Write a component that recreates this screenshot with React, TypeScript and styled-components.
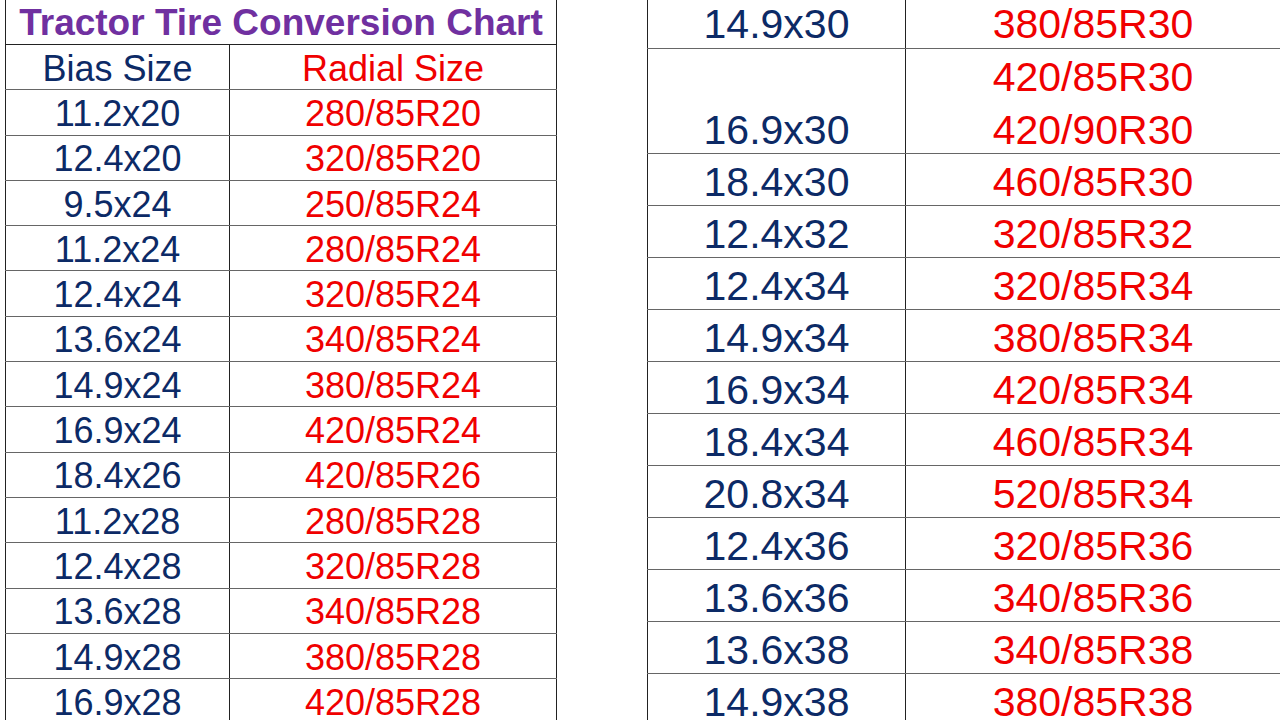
import React from 'react';
import styled, { createGlobalStyle } from 'styled-components';

const Global = createGlobalStyle`
  body { margin: 0; background: #fff; overflow: hidden; font-family: "Liberation Sans", Arial, sans-serif; }
`;

const Page = styled.div`
  display: flex;
  align-items: flex-start;
  width: 1280px;
  height: 720px;
  overflow: hidden;
`;

const Table = styled.table<{ $width: number; $left: number; $top: number }>`
  border-collapse: collapse;
  width: ${({ $width }) => $width}px;
  margin-left: ${({ $left }) => $left}px;
  margin-top: ${({ $top }) => $top}px;
  table-layout: fixed;
  flex-shrink: 0;
`;

const Title = styled.th`
  height: 44px;
  padding: 0;
  color: #7030a0;
  font-size: 37px;
  font-weight: bold;
  text-align: center;
  border: 1px solid #222;
  border-top: none;
  line-height: 1;
  white-space: nowrap;
`;

const Cell = styled.td<{ $red?: boolean; $h: number; $size: number; $padTop?: number }>`
  height: ${({ $h }) => $h}px;
  padding: ${({ $padTop = 0 }) => $padTop}px 0 0;
  text-align: center;
  font-size: ${({ $size }) => $size}px;
  line-height: 1;
  color: ${({ $red }) => ($red ? '#f00000' : '#0c2a66')};
  border: 1px solid #222;
  border-bottom-color: #666;
  box-sizing: border-box;
`;

const Stack = styled.div`
  display: flex;
  flex-direction: column;
  gap: 12px;
`;

const left: [string, string][] = [
  ['Bias Size', 'Radial Size'],
  ['11.2x20', '280/85R20'],
  ['12.4x20', '320/85R20'],
  ['9.5x24', '250/85R24'],
  ['11.2x24', '280/85R24'],
  ['12.4x24', '320/85R24'],
  ['13.6x24', '340/85R24'],
  ['14.9x24', '380/85R24'],
  ['16.9x24', '420/85R24'],
  ['18.4x26', '420/85R26'],
  ['11.2x28', '280/85R28'],
  ['12.4x28', '320/85R28'],
  ['13.6x28', '340/85R28'],
  ['14.9x28', '380/85R28'],
  ['16.9x28', '420/85R28'],
];

const right: [string, string][] = [
  ['18.4x30', '460/85R30'],
  ['12.4x32', '320/85R32'],
  ['12.4x34', '320/85R34'],
  ['14.9x34', '380/85R34'],
  ['16.9x34', '420/85R34'],
  ['18.4x34', '460/85R34'],
  ['20.8x34', '520/85R34'],
  ['12.4x36', '320/85R36'],
  ['13.6x36', '340/85R36'],
  ['13.6x38', '340/85R38'],
  ['14.9x38', '380/85R38'],
];

export default function App() {
  return (
    <Page>
      <Global />
      <Table $width={552} $left={5} $top={0}>
        <colgroup>
          <col style={{ width: 224 }} />
          <col />
        </colgroup>
        <thead>
          <tr>
            <Title colSpan={2}>Tractor Tire Conversion Chart</Title>
          </tr>
        </thead>
        <tbody>
          {left.map(([b, r]) => (
            <tr key={b}>
              <Cell $h={45.3} $size={36} $padTop={3}>{b}</Cell>
              <Cell $h={45.3} $size={36} $padTop={3} $red>{r}</Cell>
            </tr>
          ))}
        </tbody>
      </Table>
      <Table $width={634} $left={90} $top={-5}>
        <colgroup>
          <col style={{ width: 258 }} />
          <col />
        </colgroup>
        <tbody>
          <tr>
            <Cell $h={53} $size={41} $padTop={5}>14.9x30</Cell>
            <Cell $h={53} $size={41} $padTop={5} $red>380/85R30</Cell>
          </tr>
          <tr>
            <Cell $h={105} $size={41} style={{ verticalAlign: 'bottom', paddingBottom: 2 }}>16.9x30</Cell>
            <Cell $h={105} $size={41} $padTop={5} $red>
              <Stack>
                <span>420/85R30</span>
                <span>420/90R30</span>
              </Stack>
            </Cell>
          </tr>
          {right.map(([b, r]) => (
            <tr key={b}>
              <Cell $h={52} $size={41} $padTop={5}>{b}</Cell>
              <Cell $h={52} $size={41} $padTop={5} $red>{r}</Cell>
            </tr>
          ))}
        </tbody>
      </Table>
    </Page>
  );
}
